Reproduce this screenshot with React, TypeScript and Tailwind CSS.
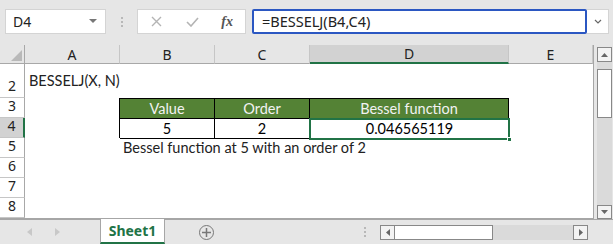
import React from "react";

const ui = { fontFamily: '"Noto Sans", "Open Sans", sans-serif' };
const cell = { fontFamily: 'Lato, "Liberation Sans", sans-serif' };

const cols = ["A", "B", "C", "D", "E"];

const Dots = () => (
	<div className="flex flex-col gap-[2px]">
		<span className="w-[2px] h-[2px] bg-[#b8b8b8]" />
		<span className="w-[2px] h-[2px] bg-[#b8b8b8]" />
		<span className="w-[2px] h-[2px] bg-[#b8b8b8]" />
	</div>
);

const FormulaBar = () => (
	<div className="flex items-start h-[45px] pt-[9px] pl-[5px]" style={ui}>
		<div className="w-[101px] h-[25px] bg-white border border-[#d4d4d4] flex items-center justify-between pl-[7px] pr-[8px]">
			<span className="text-[14px] text-[#222]">D4</span>
			<svg width="8" height="5" viewBox="0 0 8 5"><path d="M0 0h8L4 4z" fill="#777" /></svg>
		</div>
		<div className="w-[31px] h-[25px] flex items-center justify-center">
			<Dots />
		</div>
		<div className="w-[109px] h-[25px] bg-white border border-[#d4d4d4] flex items-center">
			<div className="w-[38px] flex justify-center">
				<svg width="11" height="11" viewBox="0 0 11 11"><path d="M1 1l9 9M10 1l-9 9" stroke="#b4b4b4" strokeWidth="1.4" /></svg>
			</div>
			<div className="w-[34px] flex justify-center">
				<svg width="13" height="10" viewBox="0 0 13 10"><path d="M1 5l4 4 7-8" stroke="#b4b4b4" strokeWidth="1.6" fill="none" /></svg>
			</div>
			<div className="w-[36px] flex justify-center">
				<span className="italic font-bold text-[14px] text-[#555]" style={{ fontFamily: '"Liberation Serif", serif' }}>fx</span>
			</div>
		</div>
		<div className="ml-[6px] w-[335px] h-[25px] bg-white border-2 border-[#2b57c2] rounded-[2px] flex items-center pl-[8px]">
			<span className="text-[14.5px] text-[#222]">=BESSELJ(B4,C4)</span>
		</div>
		<div className="w-[22px] h-[25px] bg-white border border-[#d4d4d4] border-l-0 flex items-center justify-center">
			<svg width="8" height="5" viewBox="0 0 8 5"><path d="M1 1l3 3 3-3" stroke="#666" strokeWidth="1.2" fill="none" /></svg>
		</div>
	</div>
);

const RowHead = ({ n, active }: { n: number; active?: boolean }) => (
	<div
		className={`flex items-end justify-center pb-[1px] border-b border-[#c6c6c6] text-[14px] text-[#222] ${active ? "bg-[#d2d2d2] border-r-2 border-r-[#217346]" : "border-r border-r-[#a8a8a8]"}`}
		style={ui}
	>
		{n}
	</div>
);

const Sheet = () => (
	<div className="relative w-[594px] grid grid-cols-[25px_95px_95px_95px_199px_84px] grid-rows-[19px_34px_20px_20px_20px_20px_20px_20px] bg-white border-r border-b border-[#a6a6a6]">
		{/* corner */}
		<div className="bg-[#e6e6e6] border-r border-b border-[#a8a8a8] flex items-end justify-end p-[2px]">
			<svg width="11" height="11" viewBox="0 0 11 11"><path d="M11 0v11H0z" fill="#b9b9b9" /></svg>
		</div>
		{cols.map((c) => (
			<div
				key={c}
				className={`flex items-center justify-center text-[14px] text-[#222] border-r border-[#c6c6c6] ${c === "D" ? "bg-[#d2d2d2] border-b-2 border-b-[#217346]" : "bg-[#e6e6e6] border-b border-b-[#a8a8a8]"}`}
				style={ui}
			>
				{c}
			</div>
		))}

		{/* row 2 */}
		<RowHead n={2} />
		<div className="col-span-5 flex items-end pl-[4px] pb-[6px] text-[14.5px] text-[#222]" style={cell}>
			BESSELJ(X, N)
		</div>

		{/* row 3 */}
		<RowHead n={3} />
		<div />
		<div className="col-span-3 row-span-2 grid grid-cols-[95px_95px_199px] grid-rows-[20px_20px] border-t border-l border-black -ml-[1px] text-[14.5px]" style={cell}>
			<div className="bg-[#548235] text-[#f2f2f2] border-r border-b border-black flex items-center justify-center">Value</div>
			<div className="bg-[#548235] text-[#f2f2f2] border-r border-b border-black flex items-center justify-center">Order</div>
			<div className="bg-[#548235] text-[#f2f2f2] border-r border-b border-black flex items-center justify-center">Bessel function</div>
			<div className="border-r border-b border-black flex items-center justify-center text-black">5</div>
			<div className="border-r border-b border-black flex items-center justify-center text-black">2</div>
			<div className="relative flex items-center justify-center text-black">
				0.046565119
				<div className="absolute -left-[1px] -top-[1px] -right-[1px] -bottom-[1px] border-2 border-[#217346]" />
				<div className="absolute -right-[3px] -bottom-[3px] w-[5px] h-[5px] bg-[#217346] border border-white" />
			</div>
		</div>
		<div />

		{/* row 4 */}
		<RowHead n={4} active />
		<div />
		<div />

		{/* row 5 */}
		<RowHead n={5} />
		<div />
		<div className="col-span-4 flex items-center pl-[3px] whitespace-nowrap text-[14.5px] text-[#222]" style={cell}>
			Bessel function at 5 with an order of 2
		</div>

		{[6, 7, 8].map((n) => (
			<React.Fragment key={n}>
				<RowHead n={n} />
				<div className="col-span-5" />
			</React.Fragment>
		))}
	</div>
);

const VScroll = () => (
	<div className="ml-[3px] mt-[2px] w-[15px] flex flex-col bg-[#dadada] h-[172px]">
		<div className="h-[15px] bg-[#f3f3f3] border border-[#888] flex items-center justify-center">
			<svg width="7" height="4" viewBox="0 0 7 4"><path d="M0 4h7L3.5 0z" fill="#666" /></svg>
		</div>
		<div className="flex-1 pt-[7px]">
			<div className="h-[49px] bg-white border border-[#888]" />
		</div>
		<div className="h-[14px] bg-[#f3f3f3] border border-[#888] flex items-center justify-center">
			<svg width="7" height="4" viewBox="0 0 7 4"><path d="M0 0h7L3.5 4z" fill="#666" /></svg>
		</div>
	</div>
);

const TabBar = () => (
	<div className="flex h-[25px] items-stretch" style={ui}>
		<div className="w-[100px] border-t border-[#a6a6a6] flex items-center pl-[27px] gap-[23px]">
			<svg width="5" height="8" viewBox="0 0 5 8"><path d="M5 0v8L0 4z" fill="#c8c8c8" /></svg>
			<svg width="5" height="8" viewBox="0 0 5 8"><path d="M0 0v8l5-4z" fill="#c8c8c8" /></svg>
		</div>
		<div className="w-[65px] bg-white border-l border-r border-[#a6a6a6] border-b-2 border-b-[#217346] flex items-center justify-center">
			<span className="font-bold text-[14px] text-[#217346]">Sheet1</span>
		</div>
		<div className="flex-1 border-t border-[#a6a6a6] flex items-center">
			<div className="ml-[34px] w-[15px] h-[15px] rounded-full border-[1.5px] border-[#777] flex items-center justify-center">
				<svg width="9" height="9" viewBox="0 0 9 9"><path d="M4.5 0v9M0 4.5h9" stroke="#777" strokeWidth="1.5" /></svg>
			</div>
			<div className="ml-[150px]">
				<Dots />
			</div>
			<div className="ml-[14px] mt-[1px] flex h-[15px] w-[208px] bg-[#dadada]">
				<div className="w-[15px] bg-[#f3f3f3] border border-[#888] flex items-center justify-center">
					<svg width="4" height="7" viewBox="0 0 4 7"><path d="M4 0v7L0 3.5z" fill="#666" /></svg>
				</div>
				<div className="w-[98px] bg-white border border-[#888] border-l-0" />
				<div className="flex-1" />
				<div className="w-[15px] bg-[#f3f3f3] border border-[#888] flex items-center justify-center">
					<svg width="4" height="7" viewBox="0 0 4 7"><path d="M0 0v7l4-3.5z" fill="#666" /></svg>
				</div>
			</div>
		</div>
	</div>
);

export default function App() {
	return (
		<div className="w-[613px] h-[244px] bg-[#e6e6e6] overflow-hidden flex flex-col">
			<FormulaBar />
			<div className="flex items-start">
				<Sheet />
				<VScroll />
			</div>
			<TabBar />
		</div>
	);
}
